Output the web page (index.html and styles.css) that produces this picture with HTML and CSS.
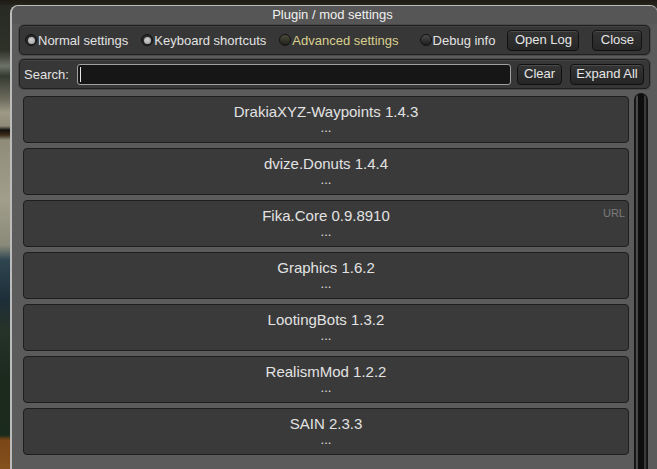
FILE: index.html
```html
<!DOCTYPE html>
<html>
<head>
<meta charset="utf-8">
<link rel="stylesheet" href="styles.css">
</head>
<body>
<div class="window">
  <div class="titlebar">Plugin / mod settings</div>
  <div class="content">
    <div class="bar toolbar">
      <label class="opt"><span class="radio on"></span>Normal settings</label>
      <label class="opt"><span class="radio on"></span>Keyboard shortcuts</label>
      <label class="opt adv"><span class="radio off olive"></span>Advanced settings</label>
      <label class="opt debug"><span class="radio off"></span>Debug info</label>
      <button class="btn openlog">Open Log</button>
      <button class="btn close">Close</button>
    </div>
    <div class="bar searchbar">
      <span class="search-label">Search:</span>
      <div class="input"><span class="caret"></span></div>
      <button class="btn clear">Clear</button>
      <button class="btn expand">Expand All</button>
    </div>
    <div class="listwrap">
      <div class="list">
        <div class="card"><div class="name">DrakiaXYZ-Waypoints 1.4.3</div><div class="dots">...</div></div>
        <div class="card"><div class="name">dvize.Donuts 1.4.4</div><div class="dots">...</div></div>
        <div class="card"><div class="name">Fika.Core 0.9.8910</div><div class="dots">...</div><span class="url">URL</span></div>
        <div class="card"><div class="name">Graphics 1.6.2</div><div class="dots">...</div></div>
        <div class="card"><div class="name">LootingBots 1.3.2</div><div class="dots">...</div></div>
        <div class="card"><div class="name">RealismMod 1.2.2</div><div class="dots">...</div></div>
        <div class="card"><div class="name">SAIN 2.3.3</div><div class="dots">...</div></div>
      </div>
      <div class="scrollbar"></div>
    </div>
  </div>
</div>
</body>
</html>
```

FILE: styles.css
```css
html, body {
  margin: 0;
  padding: 0;
}
body {
  width: 657px;
  height: 469px;
  overflow: hidden;
  box-sizing: border-box;
  padding: 5px 0 0 10px;
  font-family: "Liberation Sans", Arial, sans-serif;
  font-size: 13px;
  color: #e2e2e2;
  background:
    linear-gradient(to bottom, #1e1b15 0px, #25231b 5px, transparent 5px),
    linear-gradient(to bottom,
      #262a22 0px, #2d3128 50px, #4b4e44 58px, #6e7368 66px, #343a30 76px,
      #6f6d5e 100px, #9c9985 112px, #8f8b78 126px, #141210 130px, #3a2a18 135px,
      #8f8c7a 140px, #a19e8a 200px, #8a8a7a 245px, #2f4550 260px, #1d2e38 300px,
      #263328 330px, #1c2a1e 380px, #1a2a1c 435px, #7a4616 440px, #84501c 469px);
}
.window {
  width: 648px;
  height: 470px;
  box-sizing: border-box;
  background: #5b5b5b;
  border-top: 1px solid #bdbdbd;
  border-left: 2px solid #bcbcbc;
  border-right: 1px solid #9a9a9a;
  border-radius: 8px 8px 0 0;
  display: flex;
  flex-direction: column;
}
.titlebar {
  height: 18px;
  line-height: 18px;
  text-align: center;
  color: #f0f0f0;
  font-size: 13px;
  padding-right: 4px;
  background: #565656;
  border-radius: 7px 7px 0 0;
}
.content {
  padding: 1px 7px 0 7px;
  display: flex;
  flex-direction: column;
  flex: 1;
}
.bar {
  height: 30px;
  box-sizing: border-box;
  background: #373737;
  border: 1px solid #1f1f1f;
  border-radius: 5px;
  box-shadow: 0 0 0 1px #4a4a4a, inset 0 1px 0 #424242;
  display: flex;
  align-items: center;
}
.toolbar {
  padding: 0 5px;
}
.opt {
  display: flex;
  align-items: center;
  margin-right: 13px;
  white-space: nowrap;
}
.opt.adv {
  color: #d9cf8e;
  margin-right: 21px;
}
.opt.debug {
  margin-right: 12px;
}
.radio {
  width: 12px;
  height: 12px;
  box-sizing: border-box;
  border-radius: 50%;
  border: 1px solid #121212;
  margin-right: 1px;
  display: flex;
  align-items: center;
  justify-content: center;
}
.radio.on {
  background: #2a2a2a;
}
.radio.on::after {
  content: "";
  width: 7px;
  height: 7px;
  border-radius: 50%;
  background: radial-gradient(circle at 45% 40%, #d0d0d0, #9c9c9c);
}
.radio.off {
  background: linear-gradient(#4a4a4a, #1e1e1e);
}
.radio.off.olive {
  background: linear-gradient(#4c4c3c, #202018);
}
.btn {
  font-family: "Liberation Sans", Arial, sans-serif;
  font-size: 13px;
  color: #e6e6e6;
  height: 21px;
  box-sizing: border-box;
  padding: 0;
  background: linear-gradient(#343434, #262626);
  border: 1px solid #111;
  border-radius: 4px;
  box-shadow: inset 0 1px 0 #4c4c4c;
  line-height: 18px;
}
.openlog {
  width: 72px;
  margin-right: 13px;
}
.close {
  width: 50px;
}
.searchbar {
  margin-top: 4px;
  padding: 0 5px 0 4px;
}
.search-label {
  margin-right: 8px;
}
.input {
  width: 435px;
  height: 21px;
  box-sizing: border-box;
  background: #161616;
  border: 1px solid #a0a0a0;
  border-radius: 3px;
  display: flex;
  align-items: center;
  padding-left: 2px;
  margin-right: 6px;
}
.caret {
  width: 1px;
  height: 15px;
  background: #e8e8e8;
}
.clear {
  width: 45px;
  margin-right: 8px;
}
.expand {
  width: 74px;
}
.listwrap {
  margin-top: 4px;
  display: flex;
  padding-left: 4px;
  flex: 1;
}
.list {
  width: 606px;
  padding-top: 3px;
  display: flex;
  flex-direction: column;
  gap: 5px;
}
.card {
  position: relative;
  height: 47px;
  box-sizing: border-box;
  background: #3a3a3a;
  border: 1px solid #1e1e1e;
  border-radius: 4px;
  text-align: center;
  padding-top: 6px;
  font-size: 15px;
  line-height: 17px;
  color: #e2e2e2;
}
.dots {
  font-size: 13px;
  line-height: 16px;
}
.url {
  position: absolute;
  right: 3px;
  top: 6px;
  font-size: 11px;
  line-height: 13px;
  color: #7c7c7c;
}
.scrollbar {
  margin-left: 5px;
  width: 14px;
  box-sizing: border-box;
  border-radius: 7px 7px 0 0;
  border: 1px solid #141414;
  border-bottom: none;
  background: linear-gradient(to right, #1a1a1a 0 1px, #4a4a4a 1px 3px, #0e0e0e 3px 9px, #3a3a3a 9px 11px, #1a1a1a 11px);
}
```
